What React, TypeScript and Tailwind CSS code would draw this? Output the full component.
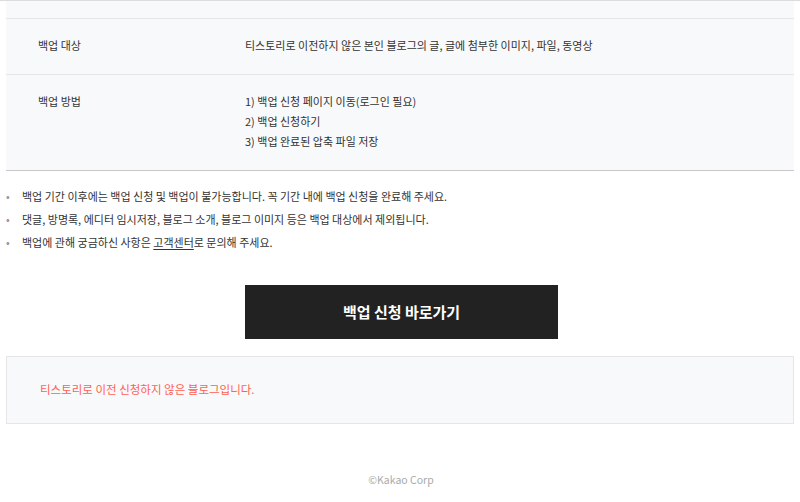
import React from "react";

const font = { fontFamily: '"Noto Sans CJK KR", "Noto Sans", sans-serif' };

export default function App() {
  return (
    <div className="w-[800px] h-[502px] bg-white text-[#333] overflow-hidden" style={font}>
      <div className="border-t border-[#dcdcdc]" />
      <div className="mx-[6px] bg-[#f8f9fb] border-b border-[#c8c8c8]">
        <div className="h-[18px] border-b border-[#e4e6e9]" />
        <div className="flex border-b border-[#e4e6e9] pt-[16px] pb-[19px] text-[11px] leading-[20px]">
          <div className="w-[239px] shrink-0 pl-[32px]">백업 대상</div>
          <div>티스토리로 이전하지 않은 본인 블로그의 글, 글에 첨부한 이미지, 파일, 동영상</div>
        </div>
        <div className="flex pt-[16px] pb-[19px] text-[11px] leading-[20px]">
          <div className="w-[239px] shrink-0 pl-[32px]">백업 방법</div>
          <div className="flex flex-col">
            <span>1) 백업 신청 페이지 이동(로그인 필요)</span>
            <span>2) 백업 신청하기</span>
            <span>3) 백업 완료된 압축 파일 저장</span>
          </div>
        </div>
      </div>
      <ul className="mt-[17px] flex flex-col gap-[6px] text-[11px] leading-[17px] text-[#333]">
        <li className="flex">
          <span className="w-[22px] pl-[6px] text-[#999]">•</span>
          <span>백업 기간 이후에는 백업 신청 및 백업이 불가능합니다. 꼭 기간 내에 백업 신청을 완료해 주세요.</span>
        </li>
        <li className="flex">
          <span className="w-[22px] pl-[6px] text-[#999]">•</span>
          <span>댓글, 방명록, 에디터 임시저장, 블로그 소개, 블로그 이미지 등은 백업 대상에서 제외됩니다.</span>
        </li>
        <li className="flex">
          <span className="w-[22px] pl-[6px] text-[#999]">•</span>
          <span>
            백업에 관해 궁금하신 사항은 <span className="underline underline-offset-2">고객센터</span>로 문의해 주세요.
          </span>
        </li>
      </ul>
      <div className="flex justify-center mt-[34px] pl-[3px]">
        <button className="w-[313px] h-[54px] bg-[#222] text-white text-[15px] font-bold">
          백업 신청 바로가기
        </button>
      </div>
      <div className="mx-[6px] mt-[17px] h-[68px] border border-[#e4e6e9] bg-[#f8f9fb] flex items-center pl-[33px] text-[11.5px] text-[#ff5f52]">
        티스토리로 이전 신청하지 않은 블로그입니다.
      </div>
      <div className="mt-[48px] text-center text-[10.5px] text-[#aaa] pl-[2px]">©Kakao Corp</div>
    </div>
  );
}
